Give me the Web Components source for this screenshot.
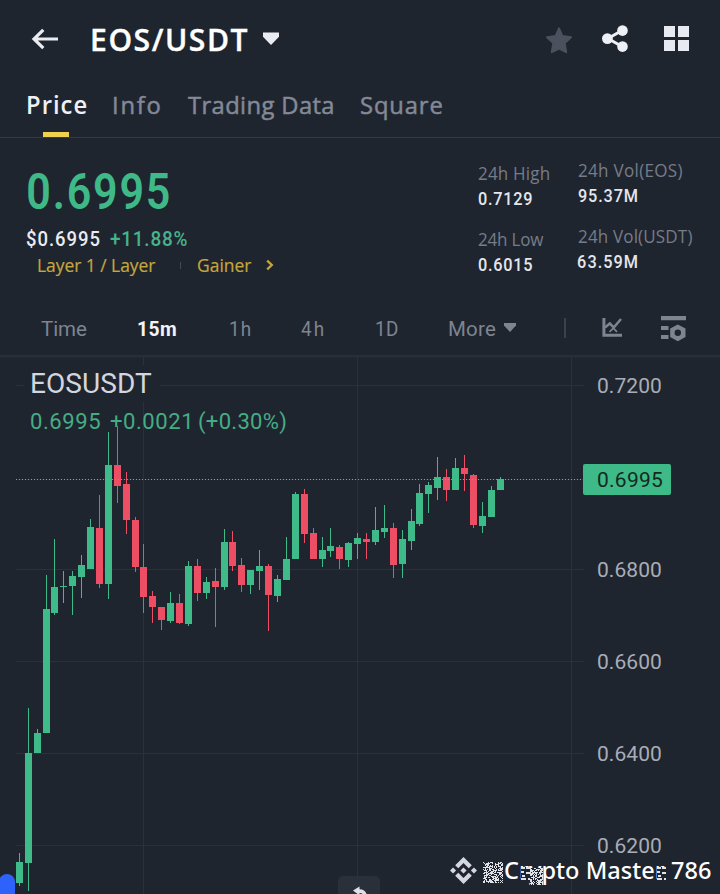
<!DOCTYPE html>
<html lang="en">
<head>
<meta charset="utf-8">
<title>EOS/USDT</title>
<style>
  html, body {
    margin: 0;
    background: #1f252f;
  }
  body {
    width: 720px;
    height: 894px;
    overflow: hidden;
    font-family: Roboto, "Liberation Sans", sans-serif;
  }
</style>
</head>
<body>
<market-page></market-page>

<script>
// One line of text whose ink fills the given width.
// "squeeze" narrows the glyphs, the rest is made up with letter-spacing.
class FitText extends HTMLElement {
  constructor() {
    super();
    this.attachShadow({ mode: "open" });
    this.shadowRoot.innerHTML = `
      <style>
        :host { display: block; flex: none; white-space: nowrap; }
        span { display: block; width: max-content; transform-origin: 0 50%; }
      </style>
      <span><slot></slot></span>
    `;
  }

  connectedCallback() {
    const width = parseFloat(this.getAttribute("width"));
    const squeeze = parseFloat(this.getAttribute("squeeze")) || 1;
    const style = getComputedStyle(this);
    const ctx = document.createElement("canvas").getContext("2d");
    ctx.font = `${style.fontWeight} ${style.fontSize} ${style.fontFamily}`;
    const text = this.textContent;
    const box = ctx.measureText(text);
    const ink = box.actualBoundingBoxLeft + box.actualBoundingBoxRight;
    const spacing = (width / squeeze - ink) / (text.length - 1);
    const span = this.shadowRoot.querySelector("span");
    this.style.width = `${width}px`;
    span.style.letterSpacing = `${spacing}px`;
    span.style.transform = `translateX(${box.actualBoundingBoxLeft * squeeze}px) scaleX(${squeeze})`;
  }
}

class MarketHeader extends HTMLElement {
  constructor() {
    super();
    this.attachShadow({ mode: "open" });
    this.shadowRoot.innerHTML = `
      <style>
        :host {
          display: flex;
          align-items: center;
          box-sizing: border-box;
          height: 78px;
          padding: 0 31px 0 31px;
          color: #fff;
          font: 600 31px/40px "Open Sans", sans-serif;
          -webkit-text-stroke: .4px;
        }
        svg { display: block; flex: none; }
        .title { margin: 0 14px 0 34px; }
        .actions { display: flex; align-items: center; margin-left: auto; }
      </style>
      <svg width="27" height="22" viewBox="0 0 27 22" fill="none" stroke="#eaecf2" stroke-width="3.2">
        <path d="M27 11H3M12.3 1.8 3 11l9.3 9.2"/>
      </svg>
      <fit-text class="title" width="156" squeeze=".97">EOS/USDT</fit-text>
      <svg width="18" height="14" viewBox="0 0 18 14" fill="#eaecf2"><path d="M1 .5h16v4.2L9 13 1 4.7z"/></svg>
      <div class="actions">
        <svg style="margin-top:2px" width="28" height="28" viewBox="0 0 28 28" fill="#4b515d" stroke="#4b515d" stroke-width="2" stroke-linejoin="round">
          <path d="m14 2.4 3.4 7.7 8.6 1.1-6.3 5.8 1.5 9.2L14 22.7l-7.2 3.5L8.3 17 2 11.2l8.6-1.1z"/>
        </svg>
        <svg style="margin-left:28px" width="28" height="28" viewBox="0 0 28 28" fill="#eef0f6">
          <path d="M21 5.5 7 13.5l14 8" fill="none" stroke="#eef0f6" stroke-width="3"/>
          <circle cx="21.5" cy="5.6" r="5.3"/><circle cx="6.4" cy="13.6" r="5.4"/><circle cx="21.5" cy="21.6" r="5.3"/>
        </svg>
        <svg style="margin:-1px 0 0 35px" width="25" height="25" viewBox="0 0 25 25" fill="#e8eaf1">
          <path d="M0 0h11v11H0zM14 0h11v11H14zM0 14h11v11H0zM14 14h11v11H14z"/>
        </svg>
      </div>
    `;
  }
}

class MarketTabs extends HTMLElement {
  constructor() {
    super();
    this.attachShadow({ mode: "open" });
    this.shadowRoot.innerHTML = `
      <style>
        :host {
          display: flex;
          box-sizing: border-box;
          height: 60px;
          padding: 9px 0 0 28px;
          border-bottom: 1px solid #333a45;
          color: #838996;
          font: 500 24.5px/35px "Open Sans", sans-serif;
          -webkit-text-stroke: .5px;
        }
        .active {
          display: flex;
          flex-direction: column;
          align-items: center;
          justify-content: space-between;
          color: #eef0f5;
          font-weight: 600;
          -webkit-text-stroke: 0;
        }
        .active i { width: 26px; height: 5px; margin-right: 2px; background: #f0d04e; }
      </style>
      <div class="active"><fit-text width="58" squeeze=".97">Price</fit-text><i></i></div>
      <fit-text style="margin-left:28px" width="46" squeeze=".97">Info</fit-text>
      <fit-text style="margin-left:28px" width="145" squeeze=".97">Trading Data</fit-text>
      <fit-text style="margin-left:28px" width="81" squeeze=".97">Square</fit-text>
    `;
  }
}

class PriceSummary extends HTMLElement {
  constructor() {
    super();
    this.attachShadow({ mode: "open" });
    this.shadowRoot.innerHTML = `
      <style>
        :host { display: flex; box-sizing: border-box; height: 162px; padding: 20px 0 0 28px; }
        .main { width: 450px; padding-top: 2px; }
        .price { color: #3fb988; font-size: 50px; font-weight: 600; line-height: 65px; }
        .row { display: flex; align-items: center; }
        .sub { margin-left: -1px; font-size: 21px; line-height: 29px; font-weight: 500; color: #eaecf2; }
        .sub .change { margin-left: 10px; color: #46b48a; }
        .tags { margin-left: 10px; color: #c6a53e; font: 400 18px/22px "Open Sans", sans-serif; -webkit-text-stroke: .2px; }
        .tags i { width: 1px; height: 7px; margin: 0 17px 0 24px; background: #434954; }
        .stats { font: 400 18.5px/24px "Open Sans", sans-serif; color: #767c88; }
        .stats.left { width: 100px; padding-top: 3px; }
        .stats .value {
          color: #e4e6ec;
          font: 500 18.5px/28px Roboto, sans-serif;
        }
        .stats .value:nth-child(2) { margin-bottom: 14px; }
      </style>
      <div class="main">
        <fit-text class="price" width="141" squeeze=".86">0.6995</fit-text>
        <div class="row sub">
          <fit-text width="73" squeeze=".88">$0.6995</fit-text>
          <fit-text class="change" width="77" squeeze=".9">+11.88%</fit-text>
        </div>
        <div class="row tags">
          <fit-text width="118" squeeze=".97">Layer 1 / Layer</fit-text>
          <i></i>
          <fit-text width="54" squeeze=".97">Gainer</fit-text>
          <svg style="margin-left:14px" width="8" height="12" viewBox="0 0 8 12" fill="none" stroke="#c6a53e" stroke-width="2.3"><path d="m1.2 1.6 4.6 4.4-4.6 4.4"/></svg>
        </div>
      </div>
      <div class="stats left">
        <fit-text width="71" squeeze=".92">24h High</fit-text>
        <fit-text class="value" width="54" squeeze=".88">0.7129</fit-text>
        <fit-text width="66" squeeze=".92">24h Low</fit-text>
        <fit-text class="value" width="54" squeeze=".88">0.6015</fit-text>
      </div>
      <div class="stats">
        <fit-text width="104" squeeze=".92">24h Vol(EOS)</fit-text>
        <fit-text class="value" width="59" squeeze=".88">95.37M</fit-text>
        <fit-text width="114" squeeze=".92">24h Vol(USDT)</fit-text>
        <fit-text class="value" width="59" squeeze=".88">63.59M</fit-text>
      </div>
    `;
  }
}

class IntervalBar extends HTMLElement {
  constructor() {
    super();
    this.attachShadow({ mode: "open" });
    this.shadowRoot.innerHTML = `
      <style>
        :host {
          display: flex;
          align-items: center;
          box-sizing: border-box;
          height: 55px;
          padding: 2px 0 0 41px;
          color: #7e8490;
          font-size: 20.5px;
          line-height: 30px;
        }
        svg { display: block; flex: none; }
        .active { color: #f2f4f8; font-weight: 700; margin-left: 51px; }
        .sep { width: 2px; height: 20px; margin: -2px 36px 0 48px; background: #3c424d; }
      </style>
      <fit-text width="46">Time</fit-text>
      <fit-text class="active" width="38" squeeze=".94">15m</fit-text>
      <fit-text style="margin-left:54px" width="20" squeeze=".92">1h</fit-text>
      <fit-text style="margin-left:51px" width="22" squeeze=".92">4h</fit-text>
      <fit-text style="margin-left:53px" width="22" squeeze=".92">1D</fit-text>
      <fit-text style="margin-left:51px" width="47">More</fit-text>
      <svg style="margin:-2px 0 0 8px" width="12" height="9" viewBox="0 0 12 9" fill="#7e8490"><path d="M0 0h12v2.4L6 9 0 2.4z"/></svg>
      <i class="sep"></i>
      <svg style="margin-top:-2px" width="21" height="21" viewBox="0 0 21 21" fill="none" stroke="#7e8490" stroke-width="3">
        <path d="M1.9 1v17.2H20"/>
        <path d="m3 10.5 4.8-4 4 4L19 2" stroke-width="2.5"/>
        <path d="m7.5 14.8 3.8-3.6 3.7 3.6" stroke-width="1.8"/>
      </svg>
      <svg style="margin-left:38px" width="25" height="27" viewBox="0 0 25 27" fill="#7e8490">
        <path d="M0 1h25v4.2H0zM0 11h7.5v4H0zM0 20h7.5v4H0z"/>
        <path fill-rule="evenodd" d="m16.8 9.4 7.7 4v8.7l-7.7 4.2-7.6-4.2v-8.7zM16.8 14.6a3.2 3.2 0 1 0 0 6.4 3.2 3.2 0 0 0 0-6.4z"/>
      </svg>
    `;
  }
}

// x, high, low, top of body, bottom of body, direction (1 up, 0 down)
const CANDLES = [
  [16, 853, 886, 862, 883, 1], [25, 708, 891, 753, 863, 1], [34, 729, 753, 733, 753, 1],
  [43, 575, 733, 609, 733, 1], [51, 539, 615, 587, 613, 1], [60, 571, 603, 586, 587, 1],
  [69, 571, 615, 576, 586, 1], [78, 555, 598, 565, 577, 1], [87, 519, 569, 527, 569, 1],
  [96, 495, 588, 528, 584, 0], [105, 432, 599, 465, 584, 1], [114, 426, 503, 465, 486, 0],
  [123, 472, 534, 484, 520, 0], [132, 517, 572, 520, 567, 0], [140, 544, 613, 567, 597, 0],
  [149, 591, 623, 596, 607, 0], [158, 607, 630, 607, 620, 0], [167, 592, 623, 603, 621, 1],
  [176, 594, 624, 603, 623, 0], [185, 561, 626, 566, 624, 1], [194, 559, 601, 566, 593, 0],
  [203, 577, 599, 582, 593, 1], [212, 568, 627, 581, 587, 0], [221, 529, 590, 542, 587, 1],
  [229, 531, 571, 542, 566, 0], [238, 558, 592, 565, 585, 0], [247, 570, 594, 570, 585, 1],
  [256, 550, 590, 566, 571, 1], [265, 564, 631, 566, 595, 0], [274, 575, 602, 579, 596, 1],
  [283, 537, 580, 559, 580, 1], [292, 492, 559, 494, 559, 1], [301, 489, 543, 494, 534, 0],
  [310, 528, 559, 533, 559, 0], [319, 537, 567, 550, 559, 1], [327, 528, 557, 546, 551, 1],
  [336, 545, 569, 547, 559, 0], [345, 542, 567, 543, 560, 1], [354, 533, 559, 538, 544, 1],
  [363, 533, 559, 539, 542, 0], [372, 507, 545, 530, 542, 1], [381, 505, 538, 528, 532, 1],
  [390, 523, 578, 528, 565, 0], [399, 530, 578, 539, 564, 1], [408, 509, 550, 521, 541, 1],
  [416, 484, 526, 493, 524, 1], [425, 482, 513, 485, 494, 1], [434, 457, 500, 477, 488, 1],
  [443, 469, 501, 477, 490, 0], [452, 458, 490, 468, 490, 1], [461, 455, 491, 468, 474, 0],
  [470, 474, 528, 475, 525, 0], [479, 502, 533, 516, 526, 1], [488, 486, 517, 490, 517, 1],
  [497, 477, 490, 479, 490, 1],
];

class CandleChart extends HTMLElement {
  constructor() {
    super();
    this.attachShadow({ mode: "open" });
    const rows = [385, 479, 569, 661, 753, 845]
      .map((y) => `<path d="M16 ${y}.5H584"/>`).join("");
    const columns = [143, 357, 571]
      .map((x) => `<path d="M${x}.5 355V894"/>`).join("");
    const candles = CANDLES.map(([x, high, low, top, bottom, up]) => `
      <g fill="${up ? "#3ebb89" : "#ee4e64"}">
        <rect x="${x + 3}" y="${high}" width="1" height="${low - high}"/>
        <rect x="${x}" y="${top}" width="7" height="${bottom - top}"/>
      </g>`).join("");

    this.shadowRoot.innerHTML = `
      <style>
        :host { display: flex; position: relative; height: 539px; overflow: hidden; }
        svg { display: block; flex: none; overflow: visible; }
        .axis {
          display: flex;
          flex-direction: column;
          margin-top: -15px;
          color: #a9adb7;
          font-size: 21px;
          line-height: 92px;
        }
        .axis > fit-text { margin-left: 15px; }
        .current { display: flex; align-items: center; height: 92px; }
        .current div {
          width: 88px;
          height: 31px;
          margin-top: 2px;
          border-radius: 2px;
          background: #3dba88;
          color: #15291f;
          line-height: 32px;
        }
        .current fit-text { margin-left: 15px; }
        .legend { position: absolute; left: 24px; top: 10px; }
        .symbol { width: 128px; padding-left: 8px; background: #1f252f; color: #d3d6df; font-size: 28px; line-height: 37px; }
        .values { display: flex; gap: 10px; padding-left: 7px; color: #45ad84; font-size: 22.5px; line-height: 38px; }
      </style>
      <svg width="583" height="539" viewBox="0 355 583 539">
        <g stroke="#2b313b">${rows}${columns}</g>
        <path d="M0 356H720" stroke="#292f3a" stroke-width="3"/>
        ${candles}
        <path d="M16 479.5H583" stroke="#7fa39b" stroke-dasharray="1 2"/>
      </svg>
      <div class="axis">
        <fit-text width="63">0.7200</fit-text>
        <div class="current"><div><fit-text width="64">0.6995</fit-text></div></div>
        <fit-text width="63">0.6800</fit-text>
        <fit-text width="63">0.6600</fit-text>
        <fit-text width="63">0.6400</fit-text>
        <fit-text width="63">0.6200</fit-text>
      </div>
      <div class="legend">
        <div class="symbol"><fit-text width="120">EOSUSDT</fit-text></div>
        <div class="values">
          <fit-text width="69" squeeze=".98">0.6995</fit-text>
          <fit-text width="80" squeeze=".98">+0.0021</fit-text>
          <fit-text width="87" style="margin-left:-1px" squeeze=".98">(+0.30%)</fit-text>
        </div>
      </div>
    `;
  }
}

// Small block of broken-up pixels, as a damaged glyph shows.
class GlitchBlock extends HTMLElement {
  connectedCallback() {
    this.attachShadow({ mode: "open" });
    const cols = parseInt(this.getAttribute("cols"));
    const rows = parseInt(this.getAttribute("rows"));
    let seed = parseInt(this.getAttribute("seed"));
    let cells = "";
    for (let y = 0; y < rows; y++) {
      for (let x = 0; x < cols; x++) {
        seed = (seed * 16807) % 2147483647;
        if (seed / 2147483647 < 0.52) cells += `M${x} ${y}h1v1h-1z`;
      }
    }
    this.shadowRoot.innerHTML = `
      <style>
        :host { position: absolute; background: #1f252f; }
        svg { display: block; }
      </style>
      <svg width="${cols}" height="${rows}" fill="#dfe2e6"><path d="${this.getAttribute("path") || cells}"/></svg>
    `;
  }
}

class ChartWatermark extends HTMLElement {
  constructor() {
    super();
    this.attachShadow({ mode: "open" });
    const broken = "M0 0h4v2H0zM5 0h4v2H5zM0 4h3v2H0zM5 5h4v2H5zM1 8h3v2H1zM0 11h5v2H0zM7 11h2v2H7z";
    this.shadowRoot.innerHTML = `
      <style>
        :host {
          position: absolute;
          left: 450px;
          top: 857px;
          display: flex;
          align-items: center;
          height: 27px;
          color: #fff;
          font: 500 23.5px/27px "Noto Sans", sans-serif;
        }
        fit-text { margin-left: 28px; }
      </style>
      <svg width="27" height="27" viewBox="0 0 126.61 126.61" fill="#d5d7df">
        <path d="M38.73 53.2 63.31 28.63 87.9 53.21 102.2 38.91 63.31 0 24.43 38.9zM0 63.31 14.3 49 28.6 63.31 14.3 77.61zM38.73 73.41 63.31 98 87.9 73.4 102.2 87.69 63.31 126.61 24.43 87.72zM98 63.31 112.3 49l14.31 14.31-14.31 14.31zM77.83 63.3 63.31 48.78 48.78 63.31l14.53 14.52z"/>
      </svg>
      <fit-text width="206">Crypto Master 786</fit-text>
      <glitch-block style="left:33px;top:5px" cols="20" rows="21" seed="4711"></glitch-block>
      <glitch-block style="left:71px;top:10px" cols="9" rows="13" seed="1" path="${broken}"></glitch-block>
      <glitch-block style="left:80px;top:11px" cols="13" rows="17" seed="9203"></glitch-block>
      <glitch-block style="left:207px;top:10px" cols="9" rows="13" seed="1" path="${broken}"></glitch-block>
    `;
  }
}

class MarketPage extends HTMLElement {
  constructor() {
    super();
    this.attachShadow({ mode: "open" });
    this.shadowRoot.innerHTML = `
      <style>
        :host { display: flex; flex-direction: column; position: relative; width: 720px; height: 894px; overflow: hidden; background: #1f252f; }
        .handle {
          position: absolute;
          left: 338px;
          top: 876px;
          width: 42px;
          height: 22px;
          border-radius: 5px;
          background: #2a303a;
        }
        .handle svg { display: block; margin: 10px 0 0 15px; }
        .bubble {
          position: absolute;
          left: -1px;
          top: 874px;
          width: 16px;
          height: 28px;
          border-radius: 8px;
          background: #2e63fb;
        }
      </style>
      <market-header></market-header>
      <market-tabs></market-tabs>
      <price-summary></price-summary>
      <interval-bar></interval-bar>
      <candle-chart></candle-chart>
      <div class="handle">
        <svg width="16" height="12" viewBox="0 0 16 12" fill="#dfe1e8"><path d="M0 4.5 6.5.5v2.7c4.5 0 7.5 3 7.5 7.8h-3c0-2.7-1.7-4-4.5-4v2.5z"/></svg>
      </div>
      <div class="bubble"></div>
      <chart-watermark></chart-watermark>
    `;
  }
}

customElements.define("fit-text", FitText);
customElements.define("market-header", MarketHeader);
customElements.define("market-tabs", MarketTabs);
customElements.define("price-summary", PriceSummary);
customElements.define("interval-bar", IntervalBar);
customElements.define("candle-chart", CandleChart);
customElements.define("glitch-block", GlitchBlock);
customElements.define("chart-watermark", ChartWatermark);
customElements.define("market-page", MarketPage);
</script>
</body>
</html>
